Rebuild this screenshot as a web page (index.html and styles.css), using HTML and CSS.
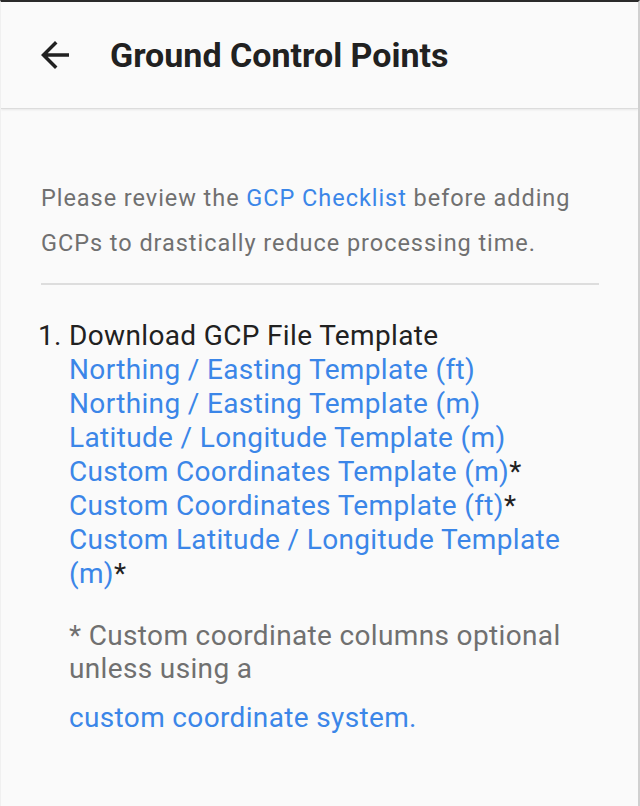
FILE: index.html
```html
<!DOCTYPE html>
<html>
<head>
<meta charset="utf-8">
<link rel="stylesheet" href="styles.css">
</head>
<body>
<div class="screen">
  <header class="appbar">
    <button class="back" aria-label="Back">
      <svg viewBox="0 0 24 24" width="42" height="42"><path d="M20 11H7.83l5.59-5.59L12 4l-8 8 8 8 1.41-1.41L7.83 13H20v-2z" fill="#212121"/></svg>
    </button>
    <h1 class="title">Ground Control Points</h1>
  </header>
  <main class="content">
    <p class="intro">Please review the <a href="#">GCP Checklist</a> before adding GCPs to drastically reduce processing time.</p>
    <hr class="divider">
    <ol class="steps">
      <li>
        <span class="step-title">Download GCP File Template</span>
        <ul class="links">
          <li><a href="#">Northing / Easting Template (ft)</a></li>
          <li><a href="#">Northing / Easting Template (m)</a></li>
          <li><a href="#">Latitude / Longitude Template (m)</a></li>
          <li><a href="#">Custom Coordinates Template (m)</a>*</li>
          <li><a href="#">Custom Coordinates Template (ft)</a>*</li>
          <li><a href="#">Custom Latitude / Longitude Template (m)</a>*</li>
        </ul>
        <p class="note">* Custom coordinate columns optional unless using a</p>
        <p class="note-link"><a href="#">custom coordinate system.</a></p>
      </li>
    </ol>
  </main>
</div>
</body>
</html>
```
FILE: styles.css
```css
* { box-sizing: border-box; }
html, body { margin: 0; padding: 0; }
body {
  background: #fafafa;
  font-family: Roboto, "Noto Sans", sans-serif;
  color: #212121;
}
.screen {
  width: 640px;
  height: 806px;
  border-top: 2px solid #2a2a2a;
  border-right: 2px solid #d0d0d0;
  border-left: 1px solid #f0f0f0;
  background: #fafafa;
  overflow: hidden;
}
.appbar {
  height: 107px;
  display: flex;
  align-items: center;
  border-bottom: 1px solid #dcdcdc;
  box-shadow: 0 1px 2px rgba(0,0,0,0.08);
  padding-left: 33px;
}
.back {
  border: none;
  background: none;
  padding: 0;
  width: 42px;
  height: 42px;
  display: flex;
  margin-right: 34px;
}
.title {
  margin: 0;
  font-size: 34px;
  font-weight: 700;
  color: #212121;
}
.content {
  padding: 67px 40px 0 40px;
}
a { color: #3b86e8; text-decoration: none; }
.intro {
  margin: 0;
  font-size: 23.5px;
  line-height: 45px;
  color: #707070;
  letter-spacing: 0.95px;
}
.divider {
  border: none;
  border-top: 2px solid #dddddd;
  margin: 17px 0 34px 0;
  width: 558px;
}
.steps {
  margin: 0;
  padding-left: 28px;
  font-size: 28px;
  line-height: 34px;
  color: #212121;
  letter-spacing: 0.35px;
}
.links {
  list-style: none;
  padding: 0;
  margin: 0;
}
.note {
  margin: 28px 0 0 0;
  color: #707070;
  line-height: 33px;
}
.note-link {
  margin: 16px 0 0 0;
}
```
